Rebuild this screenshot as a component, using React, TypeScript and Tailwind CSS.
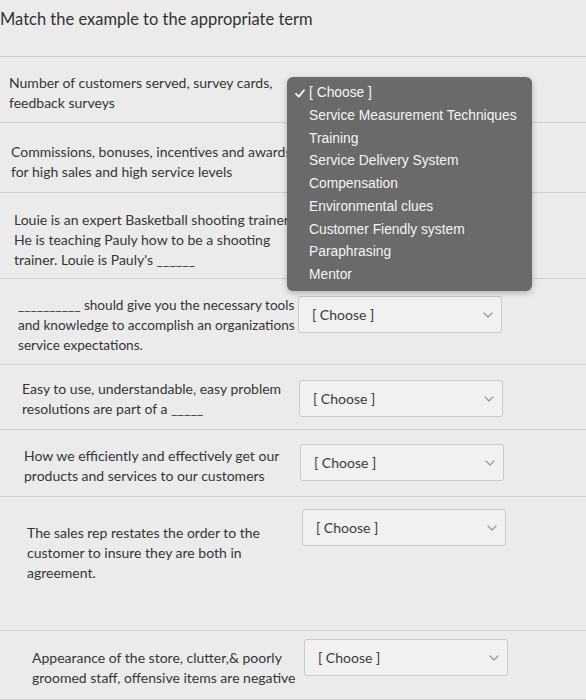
import React from "react";

const font = { fontFamily: "Lato, 'Noto Sans', sans-serif" };

function Chevron() {
  return (
    <svg width="10" height="6" viewBox="0 0 10 6" className="shrink-0">
      <path d="M1 1 L5 5 L9 1" fill="none" stroke="#9a9a9a" strokeWidth="1.3" strokeLinecap="round" strokeLinejoin="round" />
    </svg>
  );
}

function Select({ className }: { className: string }) {
  return (
    <div
      className={`flex items-center justify-between h-[37px] w-[204px] border border-[#c9c9c9] rounded-[3px] bg-[#f1f1f1] pl-[13px] pr-[8px] text-[14px] text-[#3a3a3a] ${className}`}
    >
      <span>[ Choose ]</span>
      <Chevron />
    </div>
  );
}

type RowProps = {
  lines: string[];
  h: string;
  pl: string;
  pt: string;
  textW: string;
  size?: string;
  select?: string;
};

function Row({ lines, h, pl, pt, textW, size = "text-[14px]", select }: RowProps) {
  return (
    <div className={`flex items-start border-b border-[#cfcfcf] ${h} ${pl}`}>
      <div className={`${textW} ${pt} ${size} shrink-0 leading-[20px] text-[#363636]`}>
        {lines.map((l, i) => (
          <div key={i} className="whitespace-nowrap">
            {l}
          </div>
        ))}
      </div>
      {select && <Select className={select} />}
    </div>
  );
}

const items = [
  "Service Measurement Techniques",
  "Training",
  "Service Delivery System",
  "Compensation",
  "Environmental clues",
  "Customer Fiendly system",
  "Paraphrasing",
  "Mentor",
];

export default function App() {
  return (
    <div className="relative w-[586px] h-[700px] overflow-hidden bg-[#ebebeb]" style={font}>
      <div className="h-[57px] border-b border-[#cdcdcd] pt-[8px] pl-[0px] text-[16.5px] leading-[22px] text-[#333]">
        Match the example to the appropriate term
      </div>
      <Row
        h="h-[66px]"
        pl="pl-[9px]"
        pt="pt-[16px]"
        textW="w-[278px]"
        lines={["Number of customers served, survey cards,", "feedback surveys"]}
      />
      <Row
        h="h-[70px]"
        pl="pl-[11px]"
        pt="pt-[19px]"
        textW="w-[278px]"
        lines={["Commissions, bonuses, incentives and awards", "for high sales and high service levels"]}
      />
      <Row
        h="h-[86px]"
        pl="pl-[14px]"
        pt="pt-[17px]"
        textW="w-[278px]"
        lines={[
          "Louie is an expert Basketball shooting trainer.",
          "He is teaching Pauly how to be a shooting",
          "trainer. Louie is Pauly's ______",
        ]}
      />
      <Row
        h="h-[86px]"
        pl="pl-[18px]"
        pt="pt-[16px]"
        textW="w-[280px]"
        size="text-[13.6px]"
        select="mt-[17px]"
        lines={[
          "__________ should give you the necessary tools",
          "and knowledge to accomplish an organizations",
          "service expectations.",
        ]}
      />
      <Row
        h="h-[65px]"
        pl="pl-[22px]"
        pt="pt-[14px]"
        textW="w-[277px]"
        select="mt-[15px]"
        lines={["Easy to use, understandable, easy problem", "resolutions are part of a _____"]}
      />
      <Row
        h="h-[67px]"
        pl="pl-[24px]"
        pt="pt-[16px]"
        textW="w-[276px]"
        select="mt-[14px]"
        lines={["How we efficiently and effectively get our", "products and services to our customers"]}
      />
      <Row
        h="h-[134px]"
        pl="pl-[27px]"
        pt="pt-[26px]"
        textW="w-[275px]"
        select="mt-[12px] w-[201px]"
        lines={["The sales rep restates the order to the", "customer to insure they are both in", "agreement."]}
      />
      <Row
        h="h-[69px]"
        pl="pl-[32px]"
        pt="pt-[17px]"
        textW="w-[272px]"
        select="mt-[8px] w-[199px]"
        lines={["Appearance of the store, clutter,& poorly", "groomed staff, offensive items are negative"]}
      />

      <div
        className="absolute left-[287px] top-[77px] w-[245px] h-[214px] rounded-[6px] bg-[#6a6a6a] pt-[5px] shadow-[0_2px_6px_rgba(0,0,0,0.25)] text-[#f4f4f4] text-[13.8px] leading-[22.75px]"
        style={{ fontFamily: "'Liberation Sans', Arial, sans-serif" }}
      >
        <div className="relative pl-[22px]">
          <svg width="10" height="9" viewBox="0 0 10 9" className="absolute left-[8px] top-[7px]">
            <path d="M1 4.8 L3.8 7.6 L9 1.2" fill="none" stroke="#f4f4f4" strokeWidth="1.8" strokeLinecap="round" strokeLinejoin="round" />
          </svg>
          [ Choose ]
        </div>
        {items.map((it) => (
          <div key={it} className="pl-[22px] whitespace-nowrap">
            {it}
          </div>
        ))}
      </div>
    </div>
  );
}
